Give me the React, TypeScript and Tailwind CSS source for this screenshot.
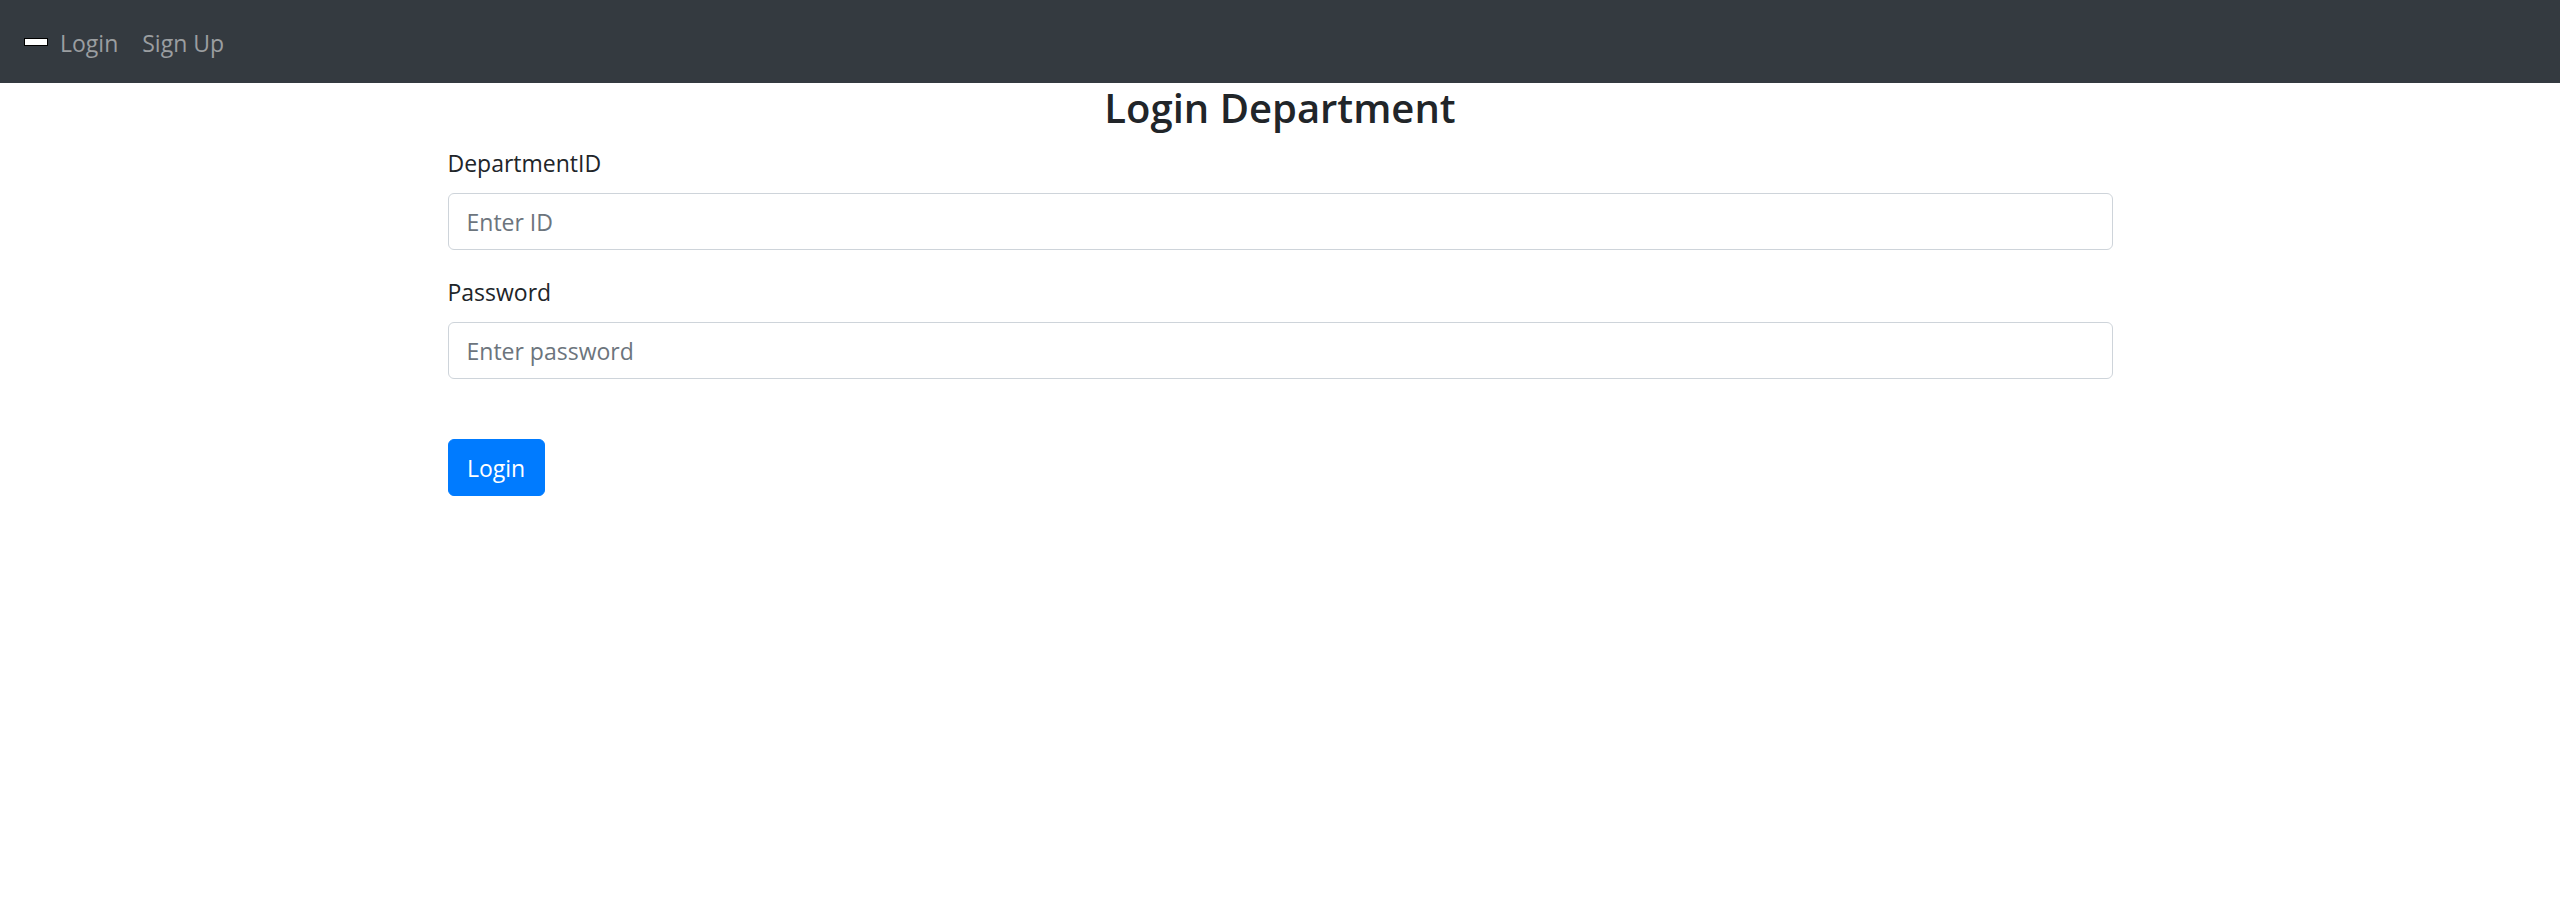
import React from "react";

function NavBar() {
  return (
    <nav className="h-[83px] bg-[#343a40] flex items-center px-6">
      {/* brand mark */}
      <span className="block w-6 h-2 bg-white border border-black" />
      <div className="flex items-center pt-[2px]">
        <a className="px-3 text-[23px] leading-9 text-[#9b9ea1]" href="#">
          Login
        </a>
        <a className="px-3 text-[23px] leading-9 text-[#9b9ea1]" href="#">
          Sign Up
        </a>
      </div>
    </nav>
  );
}

function Field({ label, placeholder, type }: { label: string; placeholder: string; type: string }) {
  return (
    <div className="mb-6">
      <label className="block mb-3 text-[23px] leading-9 text-[#212529]">{label}</label>
      <input
        type={type}
        placeholder={placeholder}
        className="block w-full h-[57px] px-[18px] py-[9px] text-[23px] leading-9 text-[#495057] bg-white border-[1.5px] border-[#ced4da] rounded-[6px] placeholder:text-[#6c757d] outline-none"
      />
    </div>
  );
}

export default function App() {
  return (
    <div className="min-h-screen bg-white font-['Open_Sans','Noto_Sans',sans-serif]">
      <NavBar />
      <div className="w-[1665px] mx-auto">
        <h3 className="text-center text-[40px] leading-[50px] font-semibold text-[#212529] mb-3">
          Login Department
        </h3>
        <form>
          <Field label="DepartmentID" placeholder="Enter ID" type="text" />
          <Field label="Password" placeholder="Enter password" type="password" />
          <div className="h-9" />
          <button
            type="button"
            className="h-[57px] w-[97px] text-[23px] leading-9 text-white bg-[#007bff] border-[1.5px] border-[#007bff] rounded-[6px]"
          >
            Login
          </button>
        </form>
      </div>
    </div>
  );
}
